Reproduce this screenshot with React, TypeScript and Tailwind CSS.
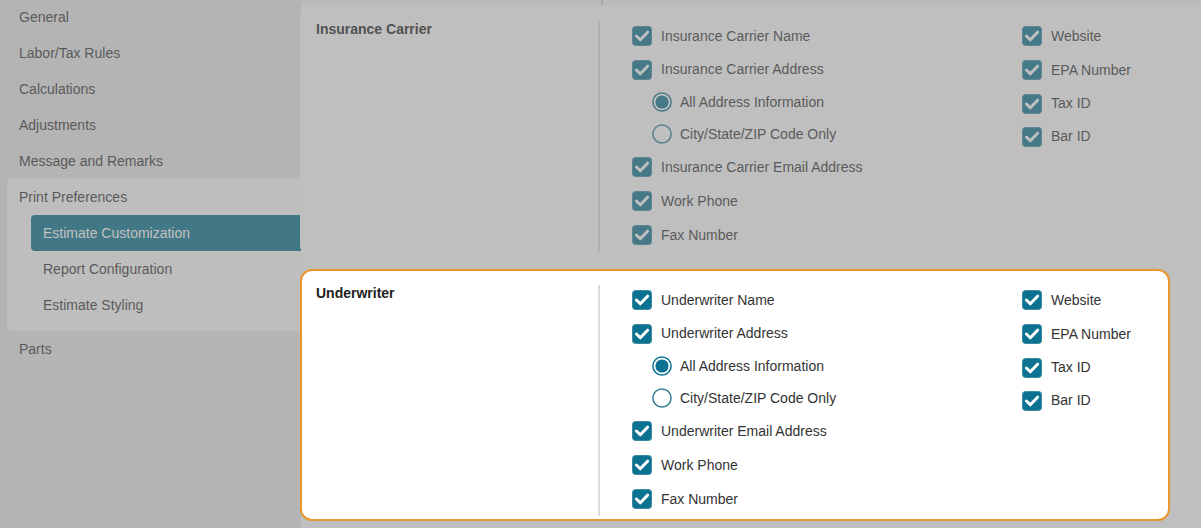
import React from "react";

const font = { fontFamily: '"Liberation Sans", Arial, sans-serif' };

function Check() {
  return (
    <svg width="20" height="20" viewBox="0 0 20 20" className="shrink-0">
      <rect x="0.5" y="0.5" width="19" height="19" rx="3" fill="#0b7391" stroke="#3f8aa0" strokeWidth="1" />
      <path d="M4.4 10 L8.3 13.8 L15.6 6.2" fill="none" stroke="#ffffff" strokeWidth="3" strokeLinecap="round" strokeLinejoin="round" />
    </svg>
  );
}

function Radio({ on }: { on: boolean }) {
  return (
    <svg width="20" height="20" viewBox="0 0 20 20" className="shrink-0">
      <circle cx="10" cy="10" r="9.1" fill="#ffffff" stroke={on ? "#0b7391" : "#2f7f96"} strokeWidth="1.5" />
      {on && <circle cx="10" cy="10" r="6.6" fill="#0b7391" />}
    </svg>
  );
}

function CheckRow({ label, h = "h-[34px]" }: { label: string; h?: string }) {
  return (
    <div className={`flex items-center gap-[9px] ${h}`}>
      <Check />
      <span className="text-[14px] text-[#333333]">{label}</span>
    </div>
  );
}

function RadioRow({ label, on }: { label: string; on: boolean }) {
  return (
    <div className="flex items-center gap-[8px] h-[32px] pl-[20px]">
      <Radio on={on} />
      <span className="text-[14px] text-[#333333]">{label}</span>
    </div>
  );
}

function Card({ title, name, highlight }: { title: string; name: string; highlight?: boolean }) {
  return (
    <div
      className={`-ml-px w-[870px] h-[252px] rounded-[12px] border-2 flex ${
        highlight ? "relative z-20 bg-white border-[#e8962e]" : "bg-white border-transparent"
      }`}
    >
      <div className="w-[296px] pl-[14px] pt-[12px]">
        <div className="text-[14px] leading-[20px] font-bold text-[#222222]">{title}</div>
      </div>
      <div className="w-[2px] bg-[#dcdcdc] mt-[14px] mb-[3px]" />
      <div className="flex pt-[12px] pl-[32px]">
        <div className="w-[390px] flex flex-col">
          <CheckRow label={`${name} Name`} />
          <CheckRow label={`${name} Address`} h="h-[33px]" />
          <RadioRow label="All Address Information" on={true} />
          <RadioRow label="City/State/ZIP Code Only" on={false} />
          <CheckRow label={`${name} Email Address`} />
          <CheckRow label="Work Phone" />
          <CheckRow label="Fax Number" />
        </div>
        <div className="flex flex-col">
          <CheckRow label="Website" />
          <CheckRow label="EPA Number" />
          <CheckRow label="Tax ID" h="h-[33px]" />
          <CheckRow label="Bar ID" h="h-[33px]" />
        </div>
      </div>
    </div>
  );
}

function NavItem({ label, sub, active }: { label: string; sub?: boolean; active?: boolean }) {
  return (
    <div
      className={`h-[36px] flex items-center text-[14px] ${
        sub ? "ml-[24px] pl-[12px] rounded-l-[4px]" : "pl-[19px]"
      } ${active ? "bg-[#05708c] text-white" : "text-[#333333]"}`}
    >
      {label}
    </div>
  );
}

export default function App() {
  return (
    <div className="relative w-[1201px] h-[528px] overflow-hidden flex bg-white" style={font}>
      <aside className="w-[301px] shrink-0 bg-[#e9e9e9] flex flex-col -mt-px">
        <NavItem label="General" />
        <NavItem label="Labor/Tax Rules" />
        <NavItem label="Calculations" />
        <NavItem label="Adjustments" />
        <NavItem label="Message and Remarks" />
        <div className="ml-[7px] bg-[#fdfdfd] rounded-l-[4px] pb-[8px]">
          <div className="h-[36px] flex items-center pl-[12px] text-[14px] text-[#333333]">Print Preferences</div>
          <NavItem label="Estimate Customization" sub active />
          <NavItem label="Report Configuration" sub />
          <NavItem label="Estimate Styling" sub />
        </div>
        <NavItem label="Parts" />
      </aside>
      <main className="flex-1 flex flex-col bg-white">
        <div className="h-[5px] bg-[#f5f5f5] flex">
          <div className="w-[300px]" />
          <div className="w-[2px] bg-[#d2d2d2]" />
        </div>
        <div className="flex flex-col gap-[12px]">
          <Card title="Insurance Carrier" name="Insurance Carrier" />
          <Card title="Underwriter" name="Underwriter" highlight />
        </div>
      </main>
      <div className="absolute inset-0 z-10 bg-[#80808080]" />
    </div>
  );
}
